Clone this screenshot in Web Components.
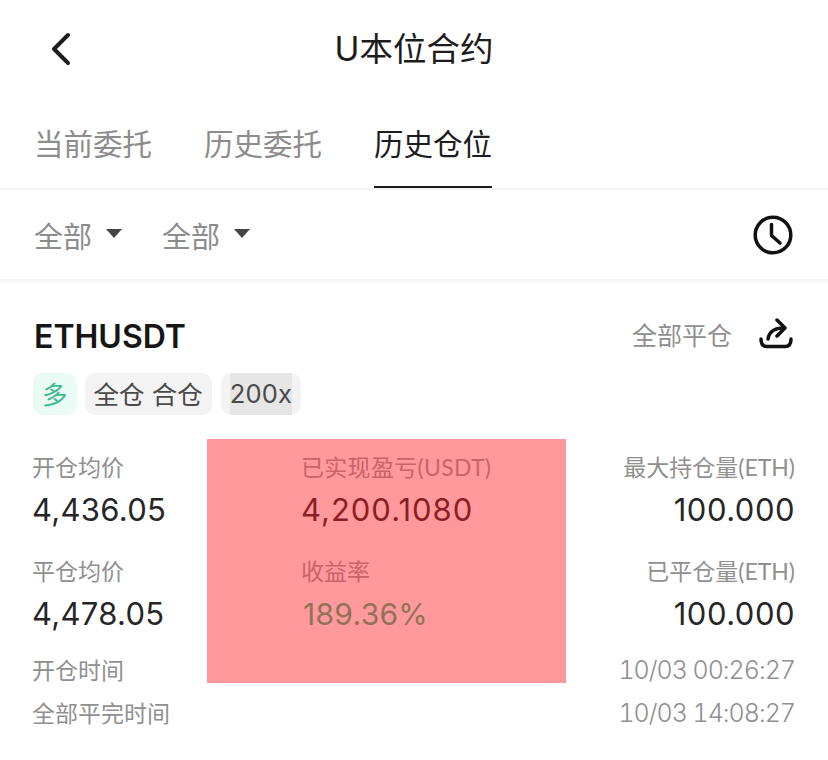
<!DOCTYPE html>
<html lang="zh">
<head>
<meta charset="utf-8">
<title>U本位合约</title>
<style>
	html, body {
		margin: 0;
		background: #fff;
	}
	body {
		width: 828px;
		height: 760px;
		overflow: hidden;
		font-family: "Inter", "Noto Sans CJK SC", sans-serif;
		color: #222;
	}
</style>
</head>
<body>
<nav-bar>U本位合约</nav-bar>
<tab-bar>
	<tab-item>当前委托</tab-item>
	<tab-item>历史委托</tab-item>
	<tab-item active>历史仓位</tab-item>
</tab-bar>
<filter-bar>
	<filter-item>全部</filter-item>
	<filter-item>全部</filter-item>
</filter-bar>
<position-card symbol="ETHUSDT">
	<tag-chip slot="tags" kind="long">多</tag-chip>
	<tag-chip slot="tags">全仓 合仓</tag-chip>
	<tag-chip slot="tags" kind="lever"><span>200x</span></tag-chip>

	<stat-cell slot="stats" label="开仓均价" value="4,436.05"></stat-cell>
	<stat-cell slot="stats" label="已实现盈亏(USDT)" value="4,200.1080" tone="loss"></stat-cell>
	<stat-cell slot="stats" label="最大持仓量(ETH)" value="100.000" align="end"></stat-cell>
	<stat-cell slot="stats" label="平仓均价" value="4,478.05"></stat-cell>
	<stat-cell slot="stats" label="收益率" value="189.36%" tone="gain"></stat-cell>
	<stat-cell slot="stats" label="已平仓量(ETH)" value="100.000" align="end"></stat-cell>

	<time-row slot="times" label="开仓时间" value="10/03 00:26:27"></time-row>
	<time-row slot="times" label="全部平完时间" value="10/03 14:08:27"></time-row>
</position-card>

<script>
// NavBar
class NavBar extends HTMLElement {
	constructor() {
		super();
		this.attachShadow({ mode: 'open' });
		this.shadowRoot.innerHTML = `
			<style>
				:host {
					display: grid;
					grid-template-columns: 1fr auto 1fr;
					align-items: center;
					height: 98px;
					font-size: 33.5px;
					color: #1c1c1c;
				}
				svg {
					margin-left: 48px;
					display: block;
				}
				.title {
					margin-bottom: 5px;
				}
			</style>
			<svg width="26" height="34" viewBox="0 0 26 34" fill="none">
				<path d="M20 3 L6 17 L20 31" stroke="#1c1c1c" stroke-width="4" stroke-linecap="round" stroke-linejoin="round"/>
			</svg>
			<div class="title"><slot></slot></div>
			<div></div>
		`;
	}
}

// TabBar
class TabBar extends HTMLElement {
	constructor() {
		super();
		this.attachShadow({ mode: 'open' });
		this.shadowRoot.innerHTML = `
			<style>
				:host {
					display: flex;
					gap: 52px;
					height: 90px;
					padding-left: 34px;
					border-bottom: 2px solid #f3f3f3;
				}
			</style>
			<slot></slot>
		`;
	}
}

class TabItem extends HTMLElement {
	constructor() {
		super();
		this.attachShadow({ mode: 'open' });
		this.shadowRoot.innerHTML = `
			<style>
				:host {
					display: block;
					height: 90px;
					box-sizing: border-box;
					padding-top: 24px;
					font-size: 29.5px;
					line-height: 44px;
					color: #8c8c8c;
				}
				:host([active]) {
					color: #1c1c1c;
					border-bottom: 2px solid #1c1c1c;
				}
			</style>
			<slot></slot>
		`;
	}
}

// FilterBar
class FilterBar extends HTMLElement {
	constructor() {
		super();
		this.attachShadow({ mode: 'open' });
		this.shadowRoot.innerHTML = `
			<style>
				:host {
					display: flex;
					align-items: center;
					gap: 40px;
					height: 89px;
					padding: 0 35px 0 34px;
					border-bottom: 3px solid #f5f5f5;
				}
				svg {
					margin-left: auto;
					display: block;
				}
			</style>
			<slot></slot>
			<svg width="40" height="40" viewBox="0 0 40 40" fill="none" stroke="#111" stroke-width="3.5" stroke-linecap="round" stroke-linejoin="round">
				<circle cx="20" cy="20" r="17.8"/>
				<path d="M18.5 9.5 V20.5 L27 28"/>
			</svg>
		`;
	}
}

class FilterItem extends HTMLElement {
	constructor() {
		super();
		this.attachShadow({ mode: 'open' });
		this.shadowRoot.innerHTML = `
			<style>
				:host {
					display: flex;
					align-items: center;
					gap: 14px;
					font-size: 29px;
					color: #8c8c8c;
				}
				i {
					display: block;
					width: 0;
					height: 0;
					border-left: 8px solid transparent;
					border-right: 8px solid transparent;
					border-top: 9px solid #444;
					margin-top: -2px;
				}
			</style>
			<slot></slot><i></i>
		`;
	}
}

// TagChip
class TagChip extends HTMLElement {
	constructor() {
		super();
		this.attachShadow({ mode: 'open' });
		this.shadowRoot.innerHTML = `
			<style>
				:host {
					display: flex;
					align-items: center;
					box-sizing: border-box;
					height: 42px;
					padding: 0 9px 3px;
					border-radius: 10px;
					font-size: 25.5px;
					color: #4a4a4a;
					background: #f3f3f3;
				}
				:host([kind="long"]) {
					color: #3dbb8c;
					background: #eafaf4;
				}
				:host([kind="lever"]) {
					padding: 0 9px 0 9px;
					margin-left: 1px;
				}
				::slotted(span) {
					background: #e6e6e6;
					line-height: 42px;
					letter-spacing: 0.2px;
				}
			</style>
			<slot></slot>
		`;
	}
}

// StatCell
class StatCell extends HTMLElement {
	constructor() {
		super();
		this.attachShadow({ mode: 'open' });
		this.shadowRoot.innerHTML = `
			<style>
				:host {
					display: flex;
					flex-direction: column;
				}
				:host([align="end"]) {
					align-items: flex-end;
				}
				.label {
					font-family: "Lato", "Noto Sans CJK SC", sans-serif;
					font-size: 23px;
					line-height: 34px;
					color: #8f8f8f;
				}
				.value {
					margin-top: 5px;
					font-size: 31px;
					line-height: 42px;
					letter-spacing: 0.3px;
					color: #262626;
				}
				:host([align="end"]) .value {
					letter-spacing: 0.5px;
				}
				:host([tone="loss"]) .label {
					letter-spacing: 0.3px;
				}
				:host([tone="loss"]) .value {
					letter-spacing: 1px;
					color: #0a0000;
				}
				:host([tone="gain"]) .value {
					color: #14b070;
					font-size: 30px;
					margin-left: 2px;
				}
			</style>
			<div class="label"></div>
			<div class="value"></div>
		`;
	}

	connectedCallback() {
		this.shadowRoot.querySelector('.label').textContent = this.getAttribute('label');
		this.shadowRoot.querySelector('.value').textContent = this.getAttribute('value');
	}
}

// TimeRow
class TimeRow extends HTMLElement {
	constructor() {
		super();
		this.attachShadow({ mode: 'open' });
		this.shadowRoot.innerHTML = `
			<style>
				:host {
					display: flex;
					justify-content: space-between;
					align-items: center;
					height: 43px;
					font-size: 23px;
					color: #8f8f8f;
				}
				.value {
					padding-top: 3px;
					font-size: 25px;
					font-weight: 300;
					font-variant-numeric: tabular-nums;
					letter-spacing: -1px;
				}
			</style>
			<span class="label"></span>
			<span class="value"></span>
		`;
	}

	connectedCallback() {
		this.shadowRoot.querySelector('.label').textContent = this.getAttribute('label');
		this.shadowRoot.querySelector('.value').textContent = this.getAttribute('value');
	}
}

// PositionCard
class PositionCard extends HTMLElement {
	constructor() {
		super();
		this.attachShadow({ mode: 'open' });
		this.shadowRoot.innerHTML = `
			<style>
				:host {
					display: block;
					position: relative;
					padding: 32px 33px 0 32px;
				}
				.head {
					display: flex;
					align-items: center;
					height: 44px;
				}
				.symbol {
					margin-left: 2px;
					font-size: 32px;
					font-weight: 600;
					color: #161616;
				}
				.close {
					margin-left: auto;
					margin-bottom: 4px;
					font-size: 25px;
					color: #8f8f8f;
				}
				.head svg {
					margin: 0 2px 4px 27px;
					display: block;
				}
				.tags {
					display: flex;
					gap: 8px;
					margin: 15px 0 0 1px;
				}
				.stats {
					display: grid;
					grid-template-columns: 269px 1fr auto;
					row-gap: 23px;
					margin-top: 35px;
				}
				.times {
					margin-top: 12px;
				}
				.mask {
					position: absolute;
					left: 207px;
					top: 157px;
					width: 359px;
					height: 244px;
					background: rgba(255, 60, 65, 0.52);
				}
			</style>
			<div class="head">
				<div class="symbol"></div>
				<div class="close">全部平仓</div>
				<svg width="34" height="32" viewBox="0 0 34 32" fill="none" stroke="#111" stroke-width="3.5" stroke-linecap="round" stroke-linejoin="round">
					<path d="M2 21 C2 26 4 28.5 8 28.5 H26 C30 28.5 32 26 32 21"/>
					<path d="M9 21 C10 14 15 10 25 10"/>
					<path d="M18 2 L26 10 L18 18"/>
				</svg>
			</div>
			<div class="tags"><slot name="tags"></slot></div>
			<div class="stats"><slot name="stats"></slot></div>
			<div class="times"><slot name="times"></slot></div>
			<div class="mask"></div>
		`;
	}

	connectedCallback() {
		this.shadowRoot.querySelector('.symbol').textContent = this.getAttribute('symbol');
	}
}

customElements.define('nav-bar', NavBar);
customElements.define('tab-bar', TabBar);
customElements.define('tab-item', TabItem);
customElements.define('filter-bar', FilterBar);
customElements.define('filter-item', FilterItem);
customElements.define('tag-chip', TagChip);
customElements.define('stat-cell', StatCell);
customElements.define('time-row', TimeRow);
customElements.define('position-card', PositionCard);
</script>
</body>
</html>
